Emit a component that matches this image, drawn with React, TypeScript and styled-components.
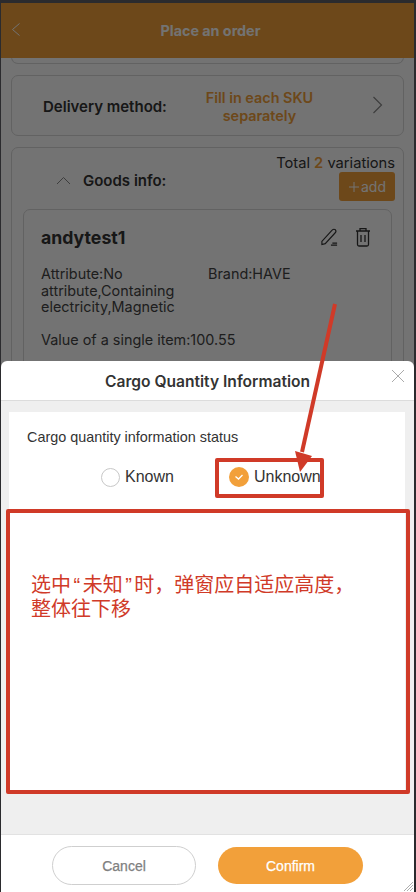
import React from "react";
import styled, { createGlobalStyle } from "styled-components";

const Global = createGlobalStyle`
  html, body { margin: 0; padding: 0; background: #2b2b2e; }
  * { box-sizing: border-box; }
  body { font-family: Inter, "Liberation Sans", "Noto Sans CJK SC", sans-serif; }
`;

const Frame = styled.div`
  position: relative;
  width: 416px;
  height: 892px;
  padding: 3px 2px 0 1px;
  background: #2b2b2e;
  overflow: hidden;
`;

const Page = styled.div`
  position: relative;
  height: 889px;
  background: #fff;
  overflow: hidden;
`;

const Header = styled.header`
  height: 55px;
  background: #f2a03a;
  display: flex;
  align-items: center;
  justify-content: center;
  position: relative;
  padding-left: 6px;
  color: #fff;
  font-size: 14.3px;
  font-weight: 700;
`;

const BackIcon = styled.svg`
  position: absolute;
  left: 10px;
  top: 19px;
`;

const Scroll = styled.div`
  padding: 0 10px;
  display: flex;
  flex-direction: column;
  gap: 11px;
  margin-top: -4px;
`;

const Card = styled.section<{ $h: number }>`
  border: 1px solid #d9d9d9;
  border-radius: 7px;
  height: ${(p) => p.$h}px;
  flex: none;
`;

const PrevCard = styled(Card)`
  border-radius: 0 0 7px 7px;
  border-top: none;
`;

const DeliveryCard = styled(Card)`
  display: flex;
  align-items: center;
  padding: 2px 20px 0 31px;
  font-size: 15px;
  font-weight: 600;
  color: #333;
`;

const DeliveryValue = styled.div`
  flex: 1;
  text-align: center;
  color: #f2a03a;
  line-height: 17.5px;
  font-weight: 600;
  padding: 0 34px 0 14px;
  font-size: 14.4px;
`;

const Chevron = styled.svg`
  margin-top: -3px;
`;

const GoodsCard = styled(Card)`
  padding: 0 8px 0 11px;
  display: flex;
  flex-direction: column;
`;

const GoodsTop = styled.div`
  display: flex;
  justify-content: space-between;
  height: 61px;
`;

const GoodsTitle = styled.div`
  display: flex;
  align-items: center;
  gap: 12px;
  padding: 3px 0 0 33px;
  font-size: 15px;
  font-weight: 600;
  color: #333;
`;

const GoodsActions = styled.div`
  display: flex;
  flex-direction: column;
  align-items: flex-end;
  padding: 7px 0 0;
  font-size: 14.7px;
  line-height: 17px;
  color: #333;
`;

const Accent = styled.span`
  color: #f2a03a;
  font-weight: 600;
`;

const AddButton = styled.div`
  width: 56px;
  height: 29px;
  background: #f2a03a;
  border-radius: 3px;
  color: #fff;
  font-size: 14px;
  display: flex;
  align-items: center;
  justify-content: center;
  gap: 1px;
`;

const ItemCard = styled.div`
  width: 369px;
  height: 300px;
  border: 1px solid #d9d9d9;
  border-radius: 7px;
  padding: 16px 17px;
`;

const ItemTop = styled.div`
  display: flex;
  justify-content: space-between;
  align-items: center;
  height: 22px;
`;

const ItemName = styled.div`
  font-size: 17.7px;
  font-weight: 700;
  color: #333;
`;

const ItemIcons = styled.div`
  display: flex;
  gap: 16px;
  margin-right: 3px;
`;

const Attrs = styled.div`
  display: grid;
  grid-template-columns: 167px 1fr;
  margin-top: 18px;
  font-size: 14.4px;
  line-height: 16.5px;
  color: #444;
`;

const ItemValue = styled.div`
  margin-top: 16.5px;
  font-size: 14.4px;
  line-height: 16.5px;
  color: #444;
`;

const Overlay = styled.div`
  position: absolute;
  inset: 0;
  background: rgba(0, 0, 0, 0.55);
`;

const Modal = styled.div`
  position: absolute;
  left: 0;
  right: 0;
  top: 358px;
  bottom: 0;
  background: #fff;
  border-radius: 6px 6px 0 0;
  display: flex;
  flex-direction: column;
`;

const ModalHeader = styled.div`
  height: 40px;
  flex: none;
  position: relative;
  border-bottom: 1px solid #dcdcdc;
  display: flex;
  align-items: center;
  justify-content: center;
  padding-top: 1px;
  font-size: 15.6px;
  font-weight: 600;
  color: #333;
`;

const CloseIcon = styled.svg`
  position: absolute;
  right: 9px;
  top: 8px;
`;

const ModalBody = styled.div`
  flex: 1;
  background: #efefef;
  padding: 11px 9px 0 8px;
`;

const StatusCard = styled.div`
  background: #fff;
  height: 380px;
  padding: 17px 18px;
  font-family: "Liberation Sans", sans-serif;
`;

const StatusLabel = styled.div`
  font-size: 14.4px;
  line-height: 16px;
  color: #333;
`;

const RadioRow = styled.div`
  display: flex;
  margin-top: 22px;
  padding-left: 74px;
  gap: 55px;
`;

const Radio = styled.div`
  display: flex;
  align-items: center;
  gap: 5px;
  height: 20px;
  font-size: 16px;
  color: #333;
`;

const RadioCircle = styled.span`
  width: 19px;
  height: 19px;
  border-radius: 50%;
  border: 1px solid #c8c8c8;
  background: #fff;
`;

const RadioChecked = styled.span`
  width: 20px;
  height: 20px;
  border-radius: 50%;
  background: #f2a03a;
  display: flex;
  align-items: center;
  justify-content: center;
`;

const Footer = styled.div`
  height: 58px;
  flex: none;
  border-top: 1px solid #e2e2e2;
  display: flex;
  justify-content: center;
  align-items: center;
  padding-top: 4px;
  gap: 22px;
  font-family: "Liberation Sans", sans-serif;
`;

const Btn = styled.div<{ $primary?: boolean }>`
  width: ${(p) => (p.$primary ? 145 : 144)}px;
  height: ${(p) => (p.$primary ? 37 : 39)}px;
  border-radius: 20px;
  border: ${(p) => (p.$primary ? "none" : "1px solid #cfcfcf")};
  background: ${(p) => (p.$primary ? "#f2a03a" : "#fff")};
  color: ${(p) => (p.$primary ? "#fff" : "#808080")};
  font-size: 14px;
  -webkit-text-stroke: 0.25px currentColor;
  display: flex;
  align-items: center;
  justify-content: center;
`;

const RedBox = styled.div<{ $l: number; $t: number; $w: number; $h: number }>`
  position: absolute;
  left: ${(p) => p.$l}px;
  top: ${(p) => p.$t}px;
  width: ${(p) => p.$w}px;
  height: ${(p) => p.$h}px;
  border: 4px solid #d03a28;
  border-radius: 2px;
`;

const Note = styled.div`
  position: absolute;
  left: 31px;
  top: 574px;
  width: 360px;
  font-size: 20px;
  line-height: 23.5px;
  color: #d03a28;
  font-family: "Liberation Sans", "Noto Sans CJK SC", sans-serif;
`;

const Quote = styled.span`
  padding: 0 2.5px;
`;

const Overlays = styled.svg`
  position: absolute;
  left: 0;
  top: 0;
`;

export default function App() {
  return (
    <Frame>
      <Global />
      <Page>
        <Header>
          <BackIcon width="10" height="16" viewBox="0 0 10 16" fill="none" stroke="#fff" strokeWidth="1">
            <path d="M8.5 1.5 L1.5 7.5 L8.5 13.5" />
          </BackIcon>
          Place an order
        </Header>
        <Scroll>
          <PrevCard $h={10} />
          <DeliveryCard $h={61}>
            Delivery method:
            <DeliveryValue>
              Fill in each SKU
              <br />
              separately
            </DeliveryValue>
            <Chevron width="11" height="18" viewBox="0 0 11 18" fill="none" stroke="#888" strokeWidth="1.2">
              <path d="M1.5 1 L9.5 9 L1.5 17" />
            </Chevron>
          </DeliveryCard>
          <GoodsCard $h={400}>
            <GoodsTop>
              <GoodsTitle>
                <svg width="15" height="9" viewBox="0 0 15 9" fill="none" stroke="#888" strokeWidth="1">
                  <path d="M1 8 L7.5 1.5 L14 8" />
                </svg>
                Goods info:
              </GoodsTitle>
              <GoodsActions>
                <span>
                  Total <Accent>2</Accent> variations
                </span>
                <AddButton>
                  <svg width="12" height="12" viewBox="0 0 12 12" stroke="#fff" strokeWidth="1">
                    <path d="M6 1 V11 M1 6 H11" />
                  </svg>
                  add
                </AddButton>
              </GoodsActions>
            </GoodsTop>
            <ItemCard>
              <ItemTop>
                <ItemName>andytest1</ItemName>
                <ItemIcons>
                  <svg width="19" height="20" viewBox="0 0 20 20" fill="none" stroke="#333" strokeWidth="1.2">
                    <path d="M2 14.5 L12.5 3 Q14.5 1 16.2 2.4 Q17.6 4 15.8 5.8 L5.5 17 L2 18 Z" />
                    <path d="M13 16.5 H18 M11.5 18.5 H18" />
                  </svg>
                  <svg width="16" height="20" viewBox="0 0 16 20" fill="none" stroke="#333" strokeWidth="1.3">
                    <path d="M1 4 H15 M5 4 V1.6 H11 V4 M2.5 4 V17.5 Q2.5 19 4 19 H12 Q13.5 19 13.5 17.5 V4 M6 8 V15 M10 8 V15" />
                  </svg>
                </ItemIcons>
              </ItemTop>
              <Attrs>
                <div>
                  Attribute:No
                  <br />
                  attribute,Containing
                  <br />
                  electricity,Magnetic
                </div>
                <div>Brand:HAVE</div>
              </Attrs>
              <ItemValue>Value of a single item:100.55</ItemValue>
            </ItemCard>
          </GoodsCard>
        </Scroll>
        <Overlay />
        <Modal>
          <ModalHeader>
            Cargo Quantity Information
            <CloseIcon width="14" height="14" viewBox="0 0 14 14" stroke="#aaa" strokeWidth="1">
              <path d="M1 1 L13 13 M13 1 L1 13" />
            </CloseIcon>
          </ModalHeader>
          <ModalBody>
            <StatusCard>
              <StatusLabel>Cargo quantity information status</StatusLabel>
              <RadioRow>
                <Radio>
                  <RadioCircle />
                  Known
                </Radio>
                <Radio>
                  <RadioChecked>
                    <svg width="10" height="8" viewBox="0 0 10 8" fill="none" stroke="#fff" strokeWidth="1.3">
                      <path d="M1.5 3.5 L4.5 6 L8.5 2" />
                    </svg>
                  </RadioChecked>
                  Unknown
                </Radio>
              </RadioRow>
            </StatusCard>
          </ModalBody>
          <Footer>
            <Btn>Cancel</Btn>
            <Btn $primary>Confirm</Btn>
          </Footer>
        </Modal>
      </Page>
      <RedBox $l={215} $t={458} $w={109} $h={40} />
      <RedBox $l={6} $t={509} $w={404} $h={285} />
      <Note>
        选中<Quote>“</Quote>未知<Quote>”</Quote>时，弹窗应自适应高度，
        <br />
        整体往下移
      </Note>
      <Overlays width="416" height="892" viewBox="0 0 416 892">
        <path d="M335 304 L302 452" stroke="#d03a28" strokeWidth="4" fill="none" />
        <path d="M295 451 L312 456 L300 472 Z" fill="#d03a28" />
        <path d="M404 891 L413 882 M407 891 L413 885 M410 891 L413 888" stroke="#999" strokeWidth="0.8" fill="none" />
      </Overlays>
    </Frame>
  );
}
